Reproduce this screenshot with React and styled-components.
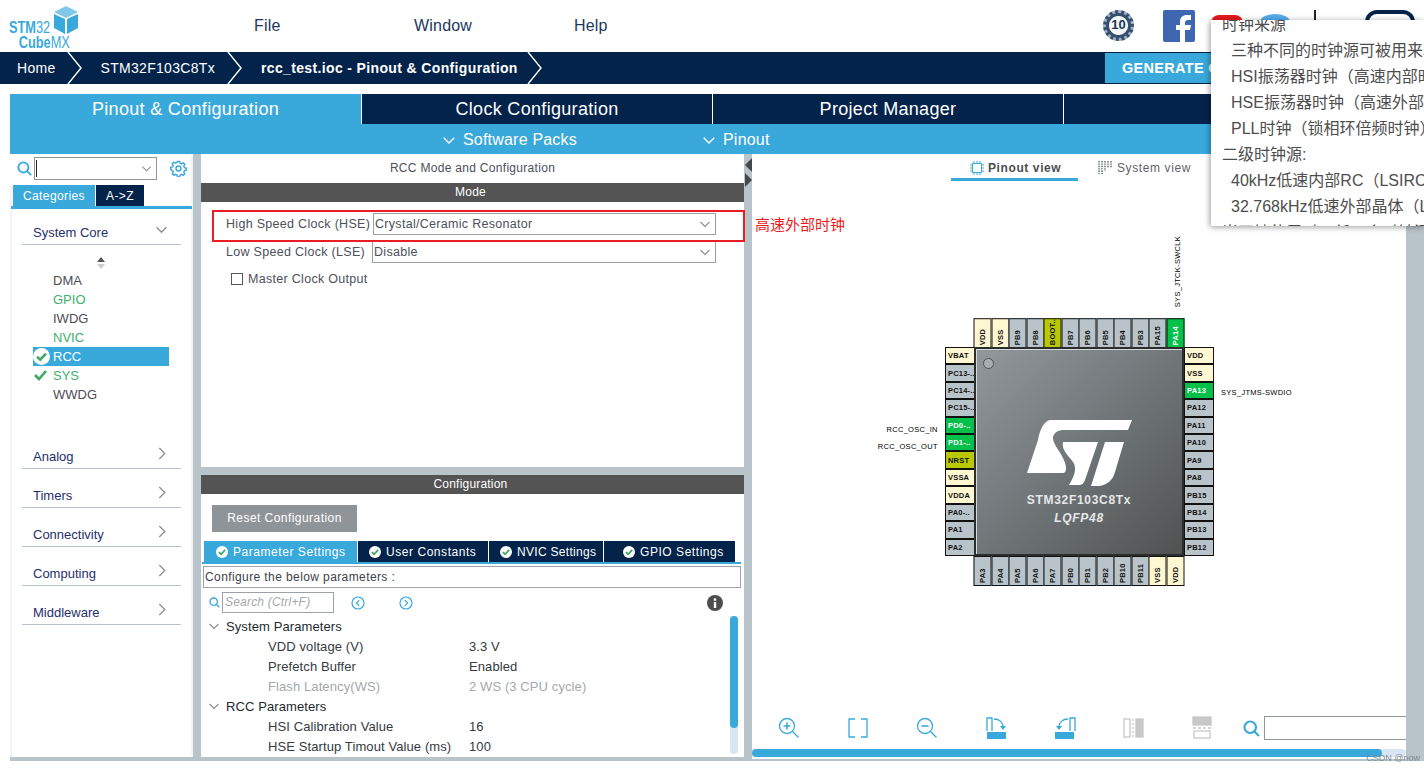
import styled, { createGlobalStyle } from 'styled-components';

const Global = createGlobalStyle`
    html, body {
        margin: 0;
        padding: 0;
        background: #fff;
    }
    * {
        box-sizing: border-box;
    }
`;

const navy = '#03234b';
const blue = '#39a9dc';
const grey = '#b9c4ca';

const Page = styled.div`
    position: relative;
    width: 1424px;
    height: 771px;
    overflow: hidden;
    background: #fff;
    font-family: "Liberation Sans", Arial, sans-serif;
`;

/** Top header */
const Header = styled.header`
    display: flex;
    height: 52px;
    position: relative;
`;

const Logo = styled.div`
    width: 254px;
    padding: 6px 0 0 9px;
    display: flex;
    color: ${blue};
    flex-shrink: 0;
`;

const LogoText = styled.div`
    width: 45px;
    padding-top: 14px;
    font-size: 17px;
    line-height: 15px;
    font-weight: bold;
    white-space: nowrap;
    transform: scaleX(0.75);
    transform-origin: left top;

    span {
        font-weight: normal;
    }

    div {
        margin-left: 13px;
    }
`;

const Cube = styled.svg`
    flex-shrink: 0;
`;

const MenuItem = styled.div`
    width: 160px;
    line-height: 51px;
    font-size: 16px;
    letter-spacing: 0.2px;
    color: #22375c;
`;

const Socials = styled.div`
    margin-left: 369px;
    padding-top: 10px;
    display: flex;
    gap: 29px;
    flex-shrink: 0;
`;

const Badge = styled.div`
    width: 31px;
    height: 31px;
    border-radius: 50%;
    background: radial-gradient(circle, #f4f6f8 0 9px, #35506f 10px);
    border: 3px dotted #9fb0c2;
    color: #1d3557;
    font-size: 13px;
    font-weight: bold;
    text-align: center;
    line-height: 24px;
`;

const Facebook = styled.div`
    width: 32px;
    height: 32px;
    border-radius: 2px;
    background: #3f66b0;
    display: flex;
    align-items: flex-end;
    justify-content: flex-end;
`;

const Youtube = styled.div`
    width: 32px;
    height: 32px;
    margin-left: -13px;
    margin-top: 5px;
    border-radius: 8px;
    background: #e5191b;
`;

const Bird = styled.div`
    width: 30px;
    height: 16px;
    margin-top: 4px;
    margin-left: -12px;
    border-radius: 50% 50% 0 0;
    background: #55aceb;
`;

const Mark = styled.div`
    width: 2px;
    height: 14px;
    margin-left: -5px;
    background: #222;
`;

const Ring = styled.div`
    width: 50px;
    height: 30px;
    margin-left: 20px;
    border: 4px solid ${navy};
    border-radius: 12px;
`;

/** Breadcrumb */
const Crumbs = styled.nav`
    display: flex;
    height: 32px;
    background: ${navy};
    color: #fff;
    font-size: 14px;
    line-height: 32px;
    letter-spacing: 0.3px;
    align-items: stretch;
`;

const Crumb = styled.div`
    white-space: nowrap;
    padding-left: ${p => p.$pad}px;
    font-weight: ${p => (p.$current ? 'bold' : 'normal')};
    letter-spacing: ${p => (p.$current ? '0.36px' : '0.3px')};
`;

const CrumbArrow = styled.svg`
    width: 17px;
    height: 32px;
    margin-left: ${p => p.$gap}px;
    flex-shrink: 0;
`;

const Generate = styled.div`
    margin-left: auto;
    margin-top: 1px;
    margin-bottom: 1px;
    width: 319px;
    padding-left: 17px;
    background: ${blue};
    font-size: 14.5px;
    font-weight: bold;
    line-height: 30px;
`;

/** Perspective tabs */
const Tabs = styled.div`
    display: flex;
    margin: 10px 0 0 10px;
    height: 30px;
    background: ${navy};
`;

const Tab = styled.div`
    width: ${p => (p.$active ? 352 : 351)}px;
    border-right: 1px solid #fff;
    background: ${p => (p.$active ? blue : navy)};
    color: #fff;
    font-size: 18px;
    letter-spacing: 0.32px;
    line-height: 31px;
    text-align: center;
`;

const SubBar = styled.div`
    display: flex;
    height: 30px;
    margin-left: 10px;
    padding: 1px 0 0 432px;
    background: ${blue};
    color: #fff;
    font-size: 16px;
    line-height: 30px;
`;

const SubItem = styled.div`
    display: flex;
    align-items: center;
    gap: 7px;
    width: 260px;
    letter-spacing: 0.2px;
`;

/** Main area */
const Main = styled.main`
    display: flex;
    height: 607px;
    margin-left: 10px;
    padding: 0 18px 4px 0;
    background: ${grey};
`;

const Left = styled.aside`
    position: relative;
    width: 183px;
    flex-shrink: 0;
    background: #fff;
    border-right: 2px solid #f2f3f4;
    border-left: 2px solid #f2f3f4;
`;

const SearchRow = styled.div`
    display: flex;
    align-items: center;
    height: 31px;
    margin-left: -5px;
    padding: 0 0 3px 10px;
    background: #fff;
`;

const ComboBox = styled.div`
    width: 123px;
    height: 23px;
    margin-left: 2px;
    border: 1px solid #8f959a;
    display: flex;
    align-items: center;
    justify-content: flex-end;
    padding-right: 4px;
    position: relative;

    &::before {
        content: '';
        position: absolute;
        left: 1px;
        top: 2px;
        bottom: 2px;
        width: 1px;
        background: #222;
    }
`;

const GearSlot = styled.span`
    margin-left: 13px;
    display: flex;
`;

const CatTabs = styled.div`
    display: flex;
    height: 24px;
    padding-left: 2px;
    border-bottom: 3px solid ${blue};
    margin-left: -1px;
    margin-right: -1px;
    gap: 1px;
`;

const CatTab = styled.div`
    width: ${p => p.$width}px;
    height: 21px;
    background: ${p => (p.$active ? blue : navy)};
    color: #fff;
    font-size: 12px;
    line-height: 22px;
    letter-spacing: 0.4px;
    text-align: center;
`;

const Category = styled.div`
    display: flex;
    align-items: flex-end;
    justify-content: space-between;
    height: ${p => p.$height}px;
    margin: 0 10px;
    padding: 0 13px 3px 11px;
    border-bottom: 1px solid ${grey};
    color: #1e2f6b;
    font-size: 13px;
    line-height: 16px;

    svg {
        margin-bottom: 5px;
    }
`;

const SortIcon = styled.div`
    display: flex;
    justify-content: center;
    padding-top: 12px;
    height: 26px;
    margin-right: 2px;
`;

const PeripheralList = styled.ul`
    list-style: none;
    margin: 0 0 0 21px;
    padding: 0;
    width: 136px;
    height: 167px;
`;

const Peripheral = styled.li`
    display: flex;
    align-items: center;
    height: 19px;
    position: relative;
    padding-left: 20px;
    font-size: 13px;
    background: ${p => (p.$selected ? blue : 'transparent')};
    color: ${p => (p.$selected ? '#fff' : p.$ok ? '#41b06c' : '#4d4d56')};
`;

const RowIcon = styled.span`
    position: absolute;
    left: ${p => p.$left}px;
    top: ${p => p.$top}px;
    display: flex;
`;

const Middle = styled.section`
    display: flex;
    flex-direction: column;
    width: 543px;
    margin-left: 8px;
    flex-shrink: 0;
    gap: 8px;
`;

const ModePanel = styled.div`
    position: relative;
    height: 313px;
    background: #fff;
    font-size: 12px;
    color: #4b5059;
    letter-spacing: 0.3px;
`;

const PanelTitle = styled.div`
    text-align: center;
    height: 29px;
    line-height: 29px;
    font-size: 12px;
    letter-spacing: 0.3px;
`;

const SectionBar = styled.div`
    height: 19px;
    padding-right: 4px;
    background: #535453;
    color: #fff;
    font-size: 12px;
    letter-spacing: 0.2px;
    text-align: center;
    line-height: 19px;
`;

const ModeRows = styled.div`
    padding: 8px 0 0 25px;
`;

const ModeRow = styled.div`
    display: flex;
    align-items: center;
    height: ${p => p.$height || 28}px;
    font-size: 12.5px;
`;

const ModeLabel = styled.div`
    width: ${p => p.$width}px;
    white-space: nowrap;
`;

const Select = styled.div`
    display: flex;
    align-items: center;
    justify-content: space-between;
    width: ${p => p.$width}px;
    height: 22px;
    padding: 0 4px 0 1px;
    border: 1px solid #9a9fa3;
`;

const CheckBox = styled.span`
    width: 12px;
    height: 12px;
    margin: 0 5px 0 5px;
    border: 1px solid #55595c;
`;

const RedBox = styled.div`
    position: absolute;
    left: 11px;
    top: 56px;
    width: 533px;
    height: 32px;
    border: 2px solid #ec1c24;
    z-index: 2;
`;

const RedNote = styled.div`
    position: absolute;
    left: 554px;
    top: 60px;
    font-family: "Noto Sans CJK SC", sans-serif;
    font-size: 15px;
    line-height: 20px;
    letter-spacing: 0;
    color: #ec1c24;
    white-space: nowrap;
    z-index: 2;
`;

const Collapse = styled.div`
    position: absolute;
    left: 544px;
    top: 4px;
    display: flex;
    z-index: 1;
`;

const ConfigPanel = styled.div`
    flex: 1;
    min-height: 0;
    display: flex;
    flex-direction: column;
    background: #fff;
`;

const ResetButton = styled.div`
    width: 145px;
    height: 27px;
    margin: 11px 0 9px 11px;
    background: #8f9499;
    color: #fff;
    font-size: 12px;
    letter-spacing: 0.45px;
    line-height: 27px;
    text-align: center;
`;

const ConfigTabs = styled.div`
    display: flex;
    gap: 1px;
    height: 23px;
    padding-left: 2px;
    border-bottom: 2px solid ${blue};
    margin-left: 1px;
    margin-right: 3px;
`;

const ConfigTab = styled.div`
    display: flex;
    align-items: center;
    gap: 5px;
    width: ${p => p.$width}px;
    height: 21px;
    padding-left: ${p => p.$pad}px;
    background: ${p => (p.$active ? blue : navy)};
    color: #fff;
    font-size: 12px;
    letter-spacing: ${p => p.$spacing || 0.55}px;
`;

const Hint = styled.div`
    height: 22px;
    margin: 2px 3px 0 2px;
    padding-left: 1px;
    border: 1px solid #9da2a6;
    font-size: 12px;
    line-height: 20px;
    letter-spacing: 0.4px;
    color: #3d4148;
`;

const ParamTools = styled.div`
    display: flex;
    align-items: center;
    height: 28px;
    padding: 1px 0 0 8px;
`;

const ParamSearch = styled.div`
    width: 112px;
    height: 21px;
    margin: 0 17px 0 2px;
    padding-left: 2px;
    border: 1px solid #9da2a6;
    color: #a5a8ab;
    font-size: 12px;
    font-style: italic;
    line-height: 19px;
    letter-spacing: 0.2px;
`;

const ToolGap = styled.div`
    width: ${p => p.$width}px;
`;

const TreeWrap = styled.div`
    position: relative;
    flex: 1;
    min-height: 0;
    overflow: hidden;
    padding: 0 0 0 7px;
`;

const TreeRow = styled.div`
    display: flex;
    align-items: center;
    height: 20px;
    font-size: 13px;
    letter-spacing: 0.1px;
    color: ${p => (p.$disabled ? '#a5a8aa' : '#343a40')};
`;

const TreeGroup = styled.div`
    display: flex;
    align-items: center;
    gap: 6px;
    height: 20px;
    font-size: 13px;
    letter-spacing: 0.1px;
    color: #24292f;
`;

const TreeName = styled.div`
    width: 201px;
    margin-left: 60px;
    white-space: nowrap;
`;

const ScrollTrack = styled.div`
    position: absolute;
    top: 0;
    right: 6px;
    bottom: 3px;
    width: 8px;
    border-radius: 4px;
    background: #d8e6f3;
`;

const ScrollThumb = styled.div`
    height: 112px;
    border-radius: 4px;
    background: ${blue};
`;

/** Pinout view */
const Right = styled.section`
    position: relative;
    display: flex;
    flex-direction: column;
    flex: 1;
    margin: 0 0 -2px 8px;
    background: #fff;
`;

const ViewTabs = styled.div`
    display: flex;
    height: 27px;
    padding-left: 199px;
`;

const ViewTab = styled.div`
    display: flex;
    align-items: center;
    gap: ${p => p.$gap}px;
    width: ${p => p.$width}px;
    padding: 3px 0 0 ${p => p.$pad}px;
    border-bottom: 3px solid ${p => (p.$active ? blue : 'transparent')};
    font-size: 12px;
    letter-spacing: 0.6px;
    font-weight: ${p => (p.$active ? 'bold' : 'normal')};
    color: ${p => (p.$active ? '#4b4f52' : '#5f6468')};
`;

const Canvas = styled.div`
    flex: 1;
    min-height: 0;
    padding: 138px 0 0 193px;
`;

const Chip = styled.div`
    display: grid;
    grid-template-columns: 29px 210px 30px;
    grid-template-rows: 29px 209px 30px;
    width: 269px;
    margin-top: -1px;
`;

const PinRow = styled.div`
    grid-column: 2;
    display: grid;
    grid-template-columns: repeat(12, 1fr);
    grid-row: ${p => p.$row};
`;

const PinColumn = styled.div`
    grid-row: 2;
    grid-column: ${p => p.$col};
    display: grid;
    grid-template-rows: repeat(12, 1fr);
`;

const pinColors = {
    io: grey,
    power: '#fff6d2',
    used: '#03c04a',
    boot: '#b9c800',
};

const Pin = styled.div`
    position: relative;
    display: flex;
    background: ${p => pinColors[p.$kind]};
    color: ${p => (p.$kind === 'used' ? '#fff' : '#111')};
    border: 1px solid #111;
    font-size: 7.5px;
    font-weight: bold;
    letter-spacing: 0.2px;
    white-space: nowrap;
    overflow: visible;
    ${p => p.$vertical
        ? `
        writing-mode: vertical-rl;
        transform: rotate(180deg);
        align-items: center;
        padding-top: 2px;
        `
        : `
        align-items: center;
        padding-left: 2px;
        `}
`;

const PinSignal = styled.span`
    position: absolute;
    color: #000;
    font-size: 7.5px;
    font-weight: normal;
    letter-spacing: 0.3px;
    line-height: 10px;
    ${p => p.$side === 'left' && 'right: 37px; top: 7px;'}
    ${p => p.$side === 'right' && 'left: 36px; top: 5px;'}
    ${p => p.$side === 'top' && 'left: 1px; top: 40px;'}
`;

const ChipBody = styled.div`
    grid-row: 2;
    grid-column: 2;
    position: relative;
    display: flex;
    flex-direction: column;
    align-items: center;
    padding-top: 71px;
    border: 2px solid #2c2e2e;
    box-shadow: inset 1px 1px 0 #d5dadd;
    background: linear-gradient(135deg, #92989b 0%, #6d7275 55%, #4f5251 100%);
    color: #e6e8e8;
`;

const Dot = styled.span`
    position: absolute;
    left: 7px;
    top: 9px;
    width: 11px;
    height: 11px;
    border-radius: 50%;
    border: 1px solid #4e5255;
    background: #a7adb0;
`;

const ChipName = styled.div`
    margin-top: 6px;
    font-size: 12px;
    font-weight: bold;
    letter-spacing: 0.7px;
    line-height: 16px;
`;

const ChipPackage = styled.div`
    margin-top: 2px;
    font-size: 12px;
    font-style: italic;
    font-weight: bold;
    letter-spacing: 0.7px;
    line-height: 16px;
`;

const ToolBar = styled.div`
    display: flex;
    align-items: center;
    height: 42px;
    padding-left: 26px;
`;

const ToolSlot = styled.div`
    width: 69px;
    display: flex;
    flex-shrink: 0;
`;

const ToolSearch = styled.span`
    margin-left: -18px;
    display: flex;
`;

const ToolInput = styled.div`
    flex: 1;
    height: 24px;
    margin-left: 4px;
    border: 1px solid #8f959a;
    border-right: none;
`;

const HScroll = styled.div`
    height: 8px;
    margin-bottom: 2px;
    background: #d8e6f3;
    border-radius: 4px;
`;

const HThumb = styled.div`
    width: 630px;
    height: 8px;
    border-radius: 4px;
    background: ${blue};
`;

const Watermark = styled.div`
    position: absolute;
    right: 4px;
    bottom: 8px;
    font-size: 9px;
    line-height: 10px;
    color: #7f8a90;
    z-index: 3;
`;

/** Popup laid over the top right corner */
const Popup = styled.div`
    position: absolute;
    left: 1211px;
    top: 20px;
    width: 213px;
    height: 206px;
    overflow: hidden;
    background: #fff;
    box-shadow: -1px 1px 6px rgba(0, 0, 0, 0.4);
    color: #4d4d4d;
    font-family: "Liberation Sans", "Noto Sans CJK SC", sans-serif;
    font-size: 16px;
    line-height: 26px;
    white-space: nowrap;
    z-index: 5;
`;

const PopupLines = styled.div`
    margin-top: -8px;
`;

const PopupLine = styled.div`
    padding-left: ${p => (p.$sub ? 20 : 11)}px;
`;

const Chevron = ({ dir = 'down', size = 12, color = '#8a8f93' }) => {
    const paths = {
        down: 'M1.5 4 L6 8.5 L10.5 4',
        right: 'M4 1 L9 6 L4 11',
    };
    return (
        <svg width={size} height={size} viewBox="0 0 12 12" fill="none">
            <path d={paths[dir]} stroke={color} strokeWidth="1.2" />
        </svg>
    );
};

const Magnifier = ({ size = 15, color = blue, width = 2 }) => (
    <svg width={size} height={size} viewBox="0 0 16 16" fill="none">
        <circle cx="6.8" cy="6.8" r="5.4" stroke={color} strokeWidth={width} />
        <path d="M10.8 10.8 L15 15" stroke={color} strokeWidth={width} />
    </svg>
);

const Gear = () => (
    <svg width="17" height="17" viewBox="0 0 24 24" fill="none" stroke={blue} strokeWidth="2">
        <circle cx="12" cy="12" r="3.5" />
        <path d="M12 2l1.6 0 .6 2.6 2.2.9 2.3-1.4 2.2 2.2-1.4 2.3.9 2.2 2.6.6v3l-2.6.6-.9 2.2 1.4 2.3-2.2 2.2-2.3-1.4-2.2.9-.6 2.6h-3l-.6-2.6-2.2-.9-2.3 1.4-2.2-2.2 1.4-2.3-.9-2.2L1 13.4v-3l2.6-.6.9-2.2-1.4-2.3 2.2-2.2 2.3 1.4 2.2-.9L10.4 2z" />
    </svg>
);

const CheckCircle = ({ size = 13, fill = '#fff', tick = '#41a868' }) => (
    <svg width={size} height={size} viewBox="0 0 16 16">
        <circle cx="8" cy="8" r="8" fill={fill} />
        <path d="M3.8 8.2 L6.8 11 L12.2 5.2" fill="none" stroke={tick} strokeWidth="2.4" />
    </svg>
);

const StLogo = () => (
    <svg width="105" height="66" viewBox="0 0 105 66" fill="#fff">
        <path d="M24 0H105L101 10H36C30 10 26 14 26 18C26 24 32 30 36 38C40 46 40 53 36 53H0L11 20C13 8 18 0 24 0Z" />
        <path d="M36 22H71L58 60C57 63 55 65 52 65H42C48 55 50 48 46 42C42 36 34 30 36 22Z" />
        <path d="M78 22H97L88 52C86 60 80 65 72 66H64Z" />
    </svg>
);

const zoomIcons = [
    <svg key="in" width="22" height="22" viewBox="0 0 22 22" fill="none" stroke={blue} strokeWidth="1.3">
        <circle cx="9" cy="9" r="7.5" />
        <path d="M14.5 14.5 L20.5 20.5" />
        <path d="M5.5 9h7M9 5.5v7" strokeWidth="1.6" />
    </svg>,
    <svg key="fit" width="22" height="22" viewBox="0 0 22 22" fill="none" stroke={blue} strokeWidth="1.3">
        <path d="M8 2H2V20H8M14 2H20V20H14" />
    </svg>,
    <svg key="out" width="22" height="22" viewBox="0 0 22 22" fill="none" stroke={blue} strokeWidth="1.3">
        <circle cx="9" cy="9" r="7.5" />
        <path d="M14.5 14.5 L20.5 20.5" />
        <path d="M5.5 9h7" strokeWidth="1.6" />
    </svg>,
    <svg key="cw" width="22" height="22" viewBox="0 0 22 22" fill="none" stroke={blue} strokeWidth="1.3">
        <path d="M2 14V1H7V14" />
        <path d="M9 2C14 2 18 5 18 10" />
        <path d="M15 9h6l-3 4z" fill={blue} stroke="none" />
        <rect x="2" y="15" width="19" height="7" fill={blue} stroke="none" />
    </svg>,
    <svg key="ccw" width="22" height="22" viewBox="0 0 22 22" fill="none" stroke={blue} strokeWidth="1.3">
        <path d="M21 14V1H16V14" />
        <path d="M14 2C9 2 5 5 5 10" />
        <path d="M2 9h6l-3 4z" fill={blue} stroke="none" />
        <rect x="1" y="15" width="19" height="7" fill={blue} stroke="none" />
    </svg>,
    <svg key="fliph" width="22" height="22" viewBox="0 0 22 22" fill="none" stroke="#c8c8c8" strokeWidth="1.3">
        <rect x="1" y="2" width="6" height="18" />
        <path d="M10 2V20" strokeDasharray="2 2" />
        <rect x="13" y="2" width="7" height="18" fill="#c8c8c8" />
    </svg>,
    <svg key="flipv" width="20" height="24" viewBox="0 0 20 24" fill="none" stroke="#c8c8c8" strokeWidth="1.3">
        <rect x="1" y="1" width="18" height="8" fill="#c8c8c8" />
        <path d="M1 12H19" strokeDasharray="3 2" />
        <rect x="2" y="15" width="16" height="7" />
    </svg>,
];

const topPins = [
    ['VDD', 'power'], ['VSS', 'power'], ['PB9', 'io'], ['PB8', 'io'], ['BOOT..', 'boot'], ['PB7', 'io'],
    ['PB6', 'io'], ['PB5', 'io'], ['PB4', 'io'], ['PB3', 'io'], ['PA15', 'io'], ['PA14', 'used', 'SYS_JTCK-SWCLK'],
];
const leftPins = [
    ['VBAT', 'power'], ['PC13-..', 'io'], ['PC14-..', 'io'], ['PC15-..', 'io'], ['PD0-..', 'used', 'RCC_OSC_IN'],
    ['PD1-..', 'used', 'RCC_OSC_OUT'], ['NRST', 'boot'], ['VSSA', 'power'], ['VDDA', 'power'], ['PA0-..', 'io'],
    ['PA1', 'io'], ['PA2', 'io'],
];
const rightPins = [
    ['VDD', 'power'], ['VSS', 'power'], ['PA13', 'used', 'SYS_JTMS-SWDIO'], ['PA12', 'io'], ['PA11', 'io'],
    ['PA10', 'io'], ['PA9', 'io'], ['PA8', 'io'], ['PB15', 'io'], ['PB14', 'io'], ['PB13', 'io'], ['PB12', 'io'],
];
const bottomPins = [
    ['PA3', 'io'], ['PA4', 'io'], ['PA5', 'io'], ['PA6', 'io'], ['PA7', 'io'], ['PB0', 'io'], ['PB1', 'io'],
    ['PB2', 'io'], ['PB10', 'io'], ['PB11', 'io'], ['VSS', 'power'], ['VDD', 'power'],
];

const peripherals = [
    { name: 'DMA' },
    { name: 'GPIO', ok: true },
    { name: 'IWDG' },
    { name: 'NVIC', ok: true },
    { name: 'RCC', ok: true, selected: true },
    { name: 'SYS', ok: true, tick: true },
    { name: 'WWDG' },
];

const popupLines = [
    ['时钟来源'],
    ['三种不同的时钟源可被用来驱动系统时钟（SYSCLK）', true],
    ['HSI振荡器时钟（高速内部时钟）', true],
    ['HSE振荡器时钟（高速外部时钟）', true],
    ['PLL时钟（锁相环倍频时钟）', true],
    ['二级时钟源:'],
    ['40kHz低速内部RC（LSIRC）', true],
    ['32.768kHz低速外部晶体（LSE）', true],
    ['当不被使用时，任一个时钟源都可被关闭'],
];

const renderPins = (pins, side, vertical) =>
    pins.map(([name, kind, signal]) => (
        <Pin key={name + side} $kind={kind} $vertical={vertical}>
            {name}
            {signal && <PinSignal $side={side}>{signal}</PinSignal>}
        </Pin>
    ));

const App = () => {
    return (
        <Page>
            <Global />

            <Header>
                <Logo>
                    <LogoText>
                        STM<span>32</span>
                        <div>Cube<span>MX</span></div>
                    </LogoText>
                    <Cube width="24" height="28" viewBox="0 0 24 28">
                        <path d="M12 0 L24 6 L12 12 L0 6Z" fill="#7fc8ea" />
                        <path d="M0 8 L11 13 V28 L0 22Z" fill={blue} />
                        <path d="M24 8 L13 13 V28 L24 22Z" fill={blue} />
                    </Cube>
                </Logo>
                <MenuItem>File</MenuItem>
                <MenuItem>Window</MenuItem>
                <MenuItem>Help</MenuItem>
                <Socials>
                    <Badge>10</Badge>
                    <Facebook>
                        <svg width="24" height="28" viewBox="0 0 24 28" fill="#fff">
                            <path d="M9 28V16H5V11H9V8C9 3 12 1 16 1C18 1 19 1 20 1V6H17C15 6 14 7 14 9V11H20L19 16H14V28Z" />
                        </svg>
                    </Facebook>
                    <Youtube />
                    <Bird />
                    <Mark />
                    <Ring />
                </Socials>
            </Header>

            <Crumbs>
                <Crumb $pad={17}>Home</Crumb>
                <CrumbArrow $gap={11} viewBox="0 0 17 32" fill="none"><path d="M1 0 L14 16 L1 32" stroke="#fff" strokeWidth="1.4" /></CrumbArrow>
                <Crumb $pad={17}>STM32F103C8Tx</Crumb>
                <CrumbArrow $gap={12} viewBox="0 0 17 32" fill="none"><path d="M1 0 L14 16 L1 32" stroke="#fff" strokeWidth="1.4" /></CrumbArrow>
                <Crumb $pad={17} $current>rcc_test.ioc - Pinout &amp; Configuration</Crumb>
                <CrumbArrow $gap={9} viewBox="0 0 17 32" fill="none"><path d="M1 0 L14 16 L1 32" stroke="#fff" strokeWidth="1.4" /></CrumbArrow>
                <Generate>GENERATE CODE</Generate>
            </Crumbs>

            <Tabs>
                <Tab $active>Pinout &amp; Configuration</Tab>
                <Tab>Clock Configuration</Tab>
                <Tab>Project Manager</Tab>
                <Tab>Tools</Tab>
            </Tabs>

            <SubBar>
                <SubItem><Chevron size={14} color="#fff" />Software Packs</SubItem>
                <SubItem><Chevron size={14} color="#fff" />Pinout</SubItem>
            </SubBar>

            <Main>
                <Left>
                    <SearchRow>
                        <Magnifier size={15} />
                        <ComboBox><Chevron size={11} /></ComboBox>
                        <GearSlot><Gear /></GearSlot>
                    </SearchRow>
                    <CatTabs>
                        <CatTab $active $width={82}>Categories</CatTab>
                        <CatTab $width={48}>A-&gt;Z</CatTab>
                    </CatTabs>
                    <Category $height={36}>System Core<Chevron size={13} /></Category>
                    <SortIcon>
                        <svg width="8" height="12" viewBox="0 0 8 12">
                            <path d="M4 0 L8 5 H0Z" fill="#555" />
                            <path d="M4 12 L8 7 H0Z" fill="#ccc" />
                        </svg>
                    </SortIcon>
                    <PeripheralList>
                        {peripherals.map(item => (
                            <Peripheral key={item.name} $ok={item.ok} $selected={item.selected}>
                                {item.selected && <RowIcon $left={0} $top={1}><CheckCircle size={17} /></RowIcon>}
                                {item.tick && (
                                    <RowIcon $left={1} $top={3}>
                                        <svg width="13" height="12" viewBox="0 0 13 12" fill="none">
                                            <path d="M1 6 L5 10 L12 2" stroke="#41a868" strokeWidth="2.6" />
                                        </svg>
                                    </RowIcon>
                                )}
                                {item.name}
                            </Peripheral>
                        ))}
                    </PeripheralList>
                    <Category $height={31}>Analog<Chevron dir="right" size={13} /></Category>
                    <Category $height={39}>Timers<Chevron dir="right" size={13} /></Category>
                    <Category $height={39}>Connectivity<Chevron dir="right" size={13} /></Category>
                    <Category $height={39}>Computing<Chevron dir="right" size={13} /></Category>
                    <Category $height={39}>Middleware<Chevron dir="right" size={13} /></Category>
                </Left>

                <Middle>
                    <ModePanel>
                        <PanelTitle>RCC Mode and Configuration</PanelTitle>
                        <SectionBar>Mode</SectionBar>
                        <RedBox />
                        <RedNote>高速外部时钟</RedNote>
                        <Collapse>
                            <svg width="8" height="30" viewBox="0 0 8 30">
                                <path d="M7 0 V14 L0 7Z" fill="#44494c" />
                                <path d="M0 15 V29 L7 22Z" fill="#44494c" />
                            </svg>
                        </Collapse>
                        <ModeRows>
                            <ModeRow>
                                <ModeLabel $width={147}>High Speed Clock (HSE)</ModeLabel>
                                <Select $width={343}>Crystal/Ceramic Resonator<Chevron /></Select>
                            </ModeRow>
                            <ModeRow>
                                <ModeLabel $width={146}>Low Speed Clock (LSE)</ModeLabel>
                                <Select $width={344}>Disable<Chevron /></Select>
                            </ModeRow>
                            <ModeRow $height={26}>
                                <CheckBox />
                                Master Clock Output
                            </ModeRow>
                        </ModeRows>
                    </ModePanel>

                    <ConfigPanel>
                        <SectionBar>Configuration</SectionBar>
                        <ResetButton>Reset Configuration</ResetButton>
                        <ConfigTabs>
                            <ConfigTab $active $width={153} $pad={12}><CheckCircle size={12} />Parameter Settings</ConfigTab>
                            <ConfigTab $width={130} $pad={11}><CheckCircle size={12} />User Constants</ConfigTab>
                            <ConfigTab $width={114} $pad={11} $spacing={0.3}><CheckCircle size={12} />NVIC Settings</ConfigTab>
                            <ConfigTab $width={131} $pad={19}><CheckCircle size={12} />GPIO Settings</ConfigTab>
                        </ConfigTabs>
                        <Hint>Configure the below parameters :</Hint>
                        <ParamTools>
                            <Magnifier size={11} />
                            <ParamSearch>Search (Ctrl+F)</ParamSearch>
                            <svg width="14" height="14" viewBox="0 0 14 14" fill="none" stroke={blue} strokeWidth="1.2">
                                <circle cx="7" cy="7" r="6" />
                                <path d="M8.2 4.2 L5.4 7 L8.2 9.8" />
                            </svg>
                            <ToolGap $width={34} />
                            <svg width="14" height="14" viewBox="0 0 14 14" fill="none" stroke={blue} strokeWidth="1.2">
                                <circle cx="7" cy="7" r="6" />
                                <path d="M5.8 4.2 L8.6 7 L5.8 9.8" />
                            </svg>
                            <ToolGap $width={294} />
                            <svg width="16" height="16" viewBox="0 0 16 16">
                                <circle cx="8" cy="8" r="8" fill="#4d4d4d" />
                                <rect x="6.8" y="7" width="2.4" height="6" fill="#fff" />
                                <rect x="6.8" y="3.4" width="2.4" height="2.4" fill="#fff" />
                            </svg>
                        </ParamTools>
                        <TreeWrap>
                            <TreeGroup><Chevron size={12} />System Parameters</TreeGroup>
                            <TreeRow><TreeName>VDD voltage (V)</TreeName>3.3 V</TreeRow>
                            <TreeRow><TreeName>Prefetch Buffer</TreeName>Enabled</TreeRow>
                            <TreeRow $disabled><TreeName>Flash Latency(WS)</TreeName>2 WS (3 CPU cycle)</TreeRow>
                            <TreeGroup><Chevron size={12} />RCC Parameters</TreeGroup>
                            <TreeRow><TreeName>HSI Calibration Value</TreeName>16</TreeRow>
                            <TreeRow><TreeName>HSE Startup Timout Value (ms)</TreeName>100</TreeRow>
                            <ScrollTrack><ScrollThumb /></ScrollTrack>
                        </TreeWrap>
                    </ConfigPanel>
                </Middle>

                <Right>
                    <ViewTabs>
                        <ViewTab $active $width={127} $gap={4} $pad={19}>
                            <svg width="14" height="14" viewBox="0 0 14 14" fill="none" stroke={blue} strokeWidth="1">
                                <rect x="2.5" y="2.5" width="9" height="9" />
                                <path d="M4 0v2M7 0v2M10 0v2M4 12v2M7 12v2M10 12v2M0 4h2M0 7h2M0 10h2M12 4h2M12 7h2M12 10h2" />
                            </svg>
                            Pinout view
                        </ViewTab>
                        <ViewTab $width={130} $gap={5} $pad={20}>
                            <svg width="14" height="13" viewBox="0 0 14 13" stroke="#6b7378" strokeWidth="1.6" strokeDasharray="1.4 1">
                                <path d="M1 0V13M4 0V13M7 0V10M10 0V7M13 0V7" />
                            </svg>
                            System view
                        </ViewTab>
                    </ViewTabs>
                    <Canvas>
                        <Chip>
                            <PinRow $row={1}>{renderPins(topPins, 'top', true)}</PinRow>
                            <PinColumn $col={1}>{renderPins(leftPins, 'left')}</PinColumn>
                            <ChipBody>
                                <Dot />
                                <StLogo />
                                <ChipName>STM32F103C8Tx</ChipName>
                                <ChipPackage>LQFP48</ChipPackage>
                            </ChipBody>
                            <PinColumn $col={3}>{renderPins(rightPins, 'right')}</PinColumn>
                            <PinRow $row={3}>{renderPins(bottomPins, 'bottom', true)}</PinRow>
                        </Chip>
                    </Canvas>
                    <ToolBar>
                        {zoomIcons.map(icon => <ToolSlot key={icon.key}>{icon}</ToolSlot>)}
                        <ToolSearch><Magnifier size={17} /></ToolSearch>
                        <ToolInput />
                    </ToolBar>
                    <HScroll><HThumb /></HScroll>
                </Right>
            </Main>

            <Watermark>CSDN @now</Watermark>

            <Popup>
                <PopupLines>
                    {popupLines.map(([text, sub]) => (
                        <PopupLine key={text} $sub={sub}>{text}</PopupLine>
                    ))}
                </PopupLines>
            </Popup>
        </Page>
    );
};

export default App;
